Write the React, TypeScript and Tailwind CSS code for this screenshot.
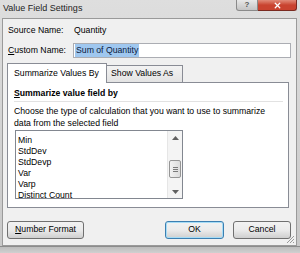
import { X } from 'lucide-react';

const items = ['Min', 'StdDev', 'StdDevp', 'Var', 'Varp', 'Distinct Count'];

function Scrollbar() {
  return (
    <div className="w-[15px] h-full bg-[#f4f4f4] border-l border-[#e6e6e6] flex flex-col items-center">
      <div className="h-[14px] flex items-center justify-center">
        <svg width="7" height="4" viewBox="0 0 7 4">
          <path d="M0 4 L3.5 0 L7 4 Z" fill="#606060" />
        </svg>
      </div>
      <div className="flex-1" />
      <div className="w-[12px] h-[18px] rounded-[2px] border border-[#959595] bg-gradient-to-r from-[#f2f2f2] to-[#dcdcdc] flex flex-col items-center justify-center gap-[1px]">
        <div className="w-[5px] h-px bg-[#7a7a7a]" />
        <div className="w-[5px] h-px bg-[#7a7a7a]" />
        <div className="w-[5px] h-px bg-[#7a7a7a]" />
      </div>
      <div className="h-[8px]" />
      <div className="h-[12px] flex items-center justify-center">
        <svg width="7" height="4" viewBox="0 0 7 4">
          <path d="M0 0 L3.5 4 L7 0 Z" fill="#606060" />
        </svg>
      </div>
    </div>
  );
}

function Button({ label, u, primary, w }: { label: string; u?: boolean; primary?: boolean; w: string }) {
  return (
    <div
      className={`${w} h-[18px] rounded-[3px] border ${primary ? 'border-[#3c7fb1] shadow-[inset_0_0_0_1px_#a6dcf6]' : 'border-[#707070]'} bg-gradient-to-b from-[#f2f2f2] via-[#ebebeb] to-[#cfcfcf] flex items-center justify-center text-black`}
    >
      {u ? (
        <span>
          <span className="underline">N</span>umber Format
        </span>
      ) : (
        label
      )}
    </div>
  );
}

export default function App() {
  return (
    <div
      className="w-[300px] h-[253px] bg-gradient-to-b from-[#dedede] to-[#c8c8c8] flex flex-col overflow-hidden select-none whitespace-nowrap"
      style={{ fontFamily: '"Liberation Sans", Arial, sans-serif' }}
    >
      {/* title bar */}
      <div className="h-[18px] flex items-start">
        <div className="pl-[3px] pt-[2px] text-[9px] leading-[12px] text-[#1e1e1e] flex-1">Value Field Settings</div>
        <div className="flex">
          <div className="w-[22px] h-[11px] rounded-bl-[3px] border border-t-0 border-[#8a8a8a] bg-gradient-to-b from-[#e8e8e8] to-[#c4c4c4] flex items-center justify-center text-[8px] leading-none font-bold text-[#555]">
            ?
          </div>
          <div className="w-[39px] h-[11px] rounded-br-[3px] border border-t-0 border-l-0 border-[#7a2a20] bg-gradient-to-b from-[#e08a78] via-[#c9432f] to-[#c9432f] flex items-center justify-center mr-[3px]">
            <X size={9} strokeWidth={3.5} className="text-white" />
          </div>
        </div>
      </div>

      {/* body */}
      <div className="mx-[2px] mr-[3px] h-[228px] border border-[#9a9a9a] bg-[#f0f0f0] flex flex-col text-[8.7px] text-black relative">
        <div className="flex items-center h-[20px] mt-[2px] pl-[5px]">
          <span className="w-[66px]">Source Name:</span>
          <span>Quantity</span>
        </div>
        <div className="flex items-center h-[15px] mt-[2px] pl-[5px]">
          <span className="w-[64px]">
            <span className="underline">C</span>ustom Name:
          </span>
          <div className="ml-[1px] w-[218px] h-[15px] border border-[#abadb3] bg-white flex items-center pl-[1px]">
            <span className="bg-[#9fc7ef] text-[#0a1a40] leading-[13px] px-[1px]">Sum of Quantity</span>
          </div>
        </div>

        {/* tabs */}
        <div className="mt-[5px] ml-[4px] w-[282px] flex flex-col">
          <div className="flex items-end h-[19px]">
            <div className="w-[100px] h-[20px] -mb-px bg-white border border-b-0 border-[#898c95] flex items-center pl-[6px] relative z-10">
              Summarize Values By
            </div>
            <div className="w-[76px] h-[17px] bg-gradient-to-b from-[#f3f3f3] to-[#e3e3e3] border border-l-0 border-b-0 border-[#898c95] flex items-center pl-[4px]">
              Show Values As
            </div>
          </div>
          <div className="h-[126px] bg-white border border-[#898c95] flex flex-col pl-[6px] pr-[5px]">
            <div className="mt-[3px] font-bold leading-[14px]">
              <span className="underline">S</span>ummarize value field by
            </div>
            <div className="h-px bg-[#e2e2e2] mt-[1px]" />
            <div className="mt-[3px] leading-[12px]">Choose the type of calculation that you want to use to summarize</div>
            <div className="leading-[12px]">data from the selected field</div>
            <div className="mt-px ml-[1px] w-[168px] h-[69px] border border-[#828790] bg-white flex">
              <div className="flex-1 flex flex-col pl-[2px] pt-[4px] leading-[11px]">
                {items.map((i) => (
                  <div key={i}>{i}</div>
                ))}
              </div>
              <Scrollbar />
            </div>
          </div>
        </div>

        {/* buttons */}
        <div className="mt-[13px] ml-[4px] flex">
          <Button label="Number Format" u w="w-[77px]" />
          <div className="flex-1" />
          <Button label="OK" primary w="w-[59px]" />
          <div className="w-[9px]" />
          <Button label="Cancel" w="w-[58px]" />
          <div className="w-[5px]" />
        </div>

        {/* resize grip */}
        <svg className="absolute right-[1px] bottom-[1px]" width="9" height="9" viewBox="0 0 9 9">
          <path d="M8 1 L1 8 M8 4 L4 8 M8 7 L7 8" stroke="#9a9a9a" strokeWidth="1" />
        </svg>
      </div>
      <div className="flex-1 border-t border-[#8c8c8c] bg-gradient-to-b from-[#bdbdbd] to-[#d0d0d0]" />
    </div>
  );
}
